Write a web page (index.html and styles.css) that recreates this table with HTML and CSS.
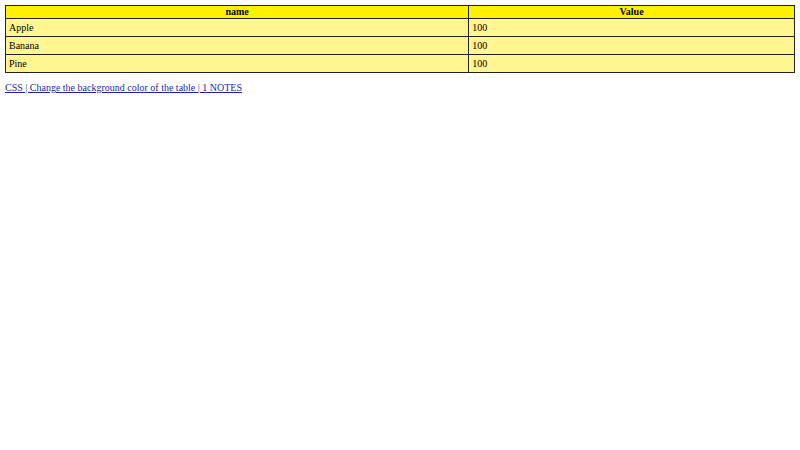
FILE: index.html
```html
<!DOCTYPE html>
<html>
<head>
<meta charset="utf-8">
<link rel="stylesheet" href="styles.css">
</head>
<body>
<table class="fruit-table">
  <thead>
    <tr><th class="col-name">name</th><th>Value</th></tr>
  </thead>
  <tbody>
    <tr><td>Apple</td><td>100</td></tr>
    <tr><td>Banana</td><td>100</td></tr>
    <tr><td>Pine</td><td>100</td></tr>
  </tbody>
</table>
<p class="links"><a href="#">CSS | Change the background color of the table | 1 NOTES</a></p>
</body>
</html>
```
FILE: styles.css
```css
body {
  margin: 5px;
  font-family: "Liberation Serif", "Times New Roman", serif;
  font-size: 10px;
  background: #fff;
  color: #000;
}
.fruit-table {
  width: 100%;
  border-collapse: collapse;
  border: 1px solid #222;
}
.fruit-table th,
.fruit-table td {
  border: 1px solid #222;
}
.fruit-table th {
  background: #fff200;
  font-weight: bold;
  line-height: 12px;
  padding: 0 3px;
  text-align: center;
}
.col-name {
  width: 58.7%;
}
.fruit-table td {
  background: #fff68f;
  line-height: 13px;
  padding: 2px 3px;
  text-align: left;
}
.links {
  margin: 8px 0 0;
  line-height: 14px;
}
.links a {
  color: #1f1fa8;
}
```
